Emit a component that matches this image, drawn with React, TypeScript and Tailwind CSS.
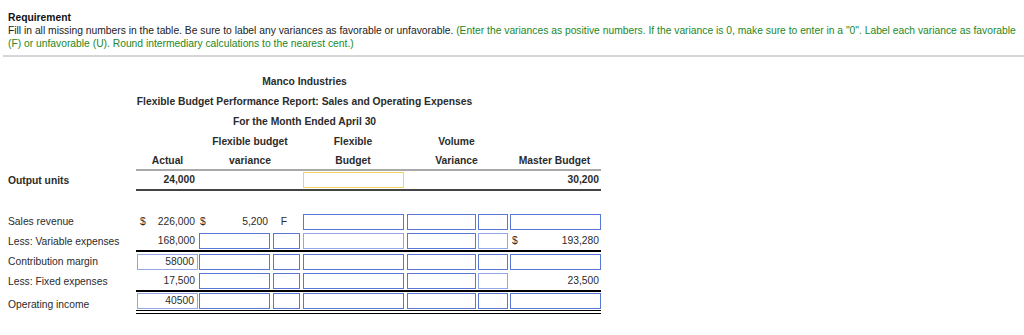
import React from "react";

const font = { fontFamily: '"Liberation Sans", Arial, Helvetica, sans-serif' };

function Box({ w, ml = "ml-[2px]", light, children }: { w: string; ml?: string; light?: boolean; children?: React.ReactNode }) {
  return (
    <div
      className={`${w} ${ml} h-[16px] border ${
        light ? "border-[#93a6e6]" : "border-[#5a76d4]"
      } bg-white text-right pr-[3px] leading-[14px]`}
    >
      {children}
    </div>
  );
}

// widths of the columns, right of the label column
const C = {
  actual: "w-[63px]",
  varAmt: "w-[72px]",
  varF: "w-[30px]",
  flex: "w-[104px]",
  volAmt: "w-[71px]",
  volF: "w-[32px]",
  master: "w-[93px]",
};

function Cell({ w, className = "", children }: { w: string; className?: string; children?: React.ReactNode }) {
  return <div className={`${w} flex items-center shrink-0 ${className}`}>{children}</div>;
}

function Row({
  label,
  line = "",
  h = "h-[20px]",
  labelClass = "",
  children,
}: {
  label: string;
  line?: string;
  h?: string;
  labelClass?: string;
  children: React.ReactNode;
}) {
  return (
    <div className={`flex ${h}`}>
      <div className={`w-[128px] shrink-0 flex items-center ${labelClass}`}>{label}</div>
      <div className={`flex ${line}`}>{children}</div>
    </div>
  );
}

export default function App() {
  return (
    <div className="w-[1024px] h-[335px] bg-white text-[#2b2b2b] text-[10.3px] overflow-hidden" style={font}>
      {/* Requirement */}
      <div className="pt-[11px] px-2 leading-[13px]">
        <div className="font-bold text-[#111]">Requirement</div>
        <p className="text-[#222]">
          Fill in all missing numbers in the table. Be sure to label any variances as favorable or unfavorable.{" "}
          <span className="text-[#23881f]">
            (Enter the variances as positive numbers. If the variance is 0, make sure to enter in a "0". Label each
            variance as favorable (F) or unfavorable (U). Round intermediary calculations to the nearest cent.)
          </span>
        </p>
      </div>
      <div className="ml-[3px] mt-[5px] h-[2px] bg-[#d6d6d6]" />

      {/* Report */}
      <div className="ml-2 mt-[15px] w-[593px]">
        <div className="font-bold text-center">
          <div className="h-[20px] leading-[20px]">Manco Industries</div>
          <div className="h-[20px] leading-[20px]">Flexible Budget Performance Report: Sales and Operating Expenses</div>
          <div className="h-[20px] leading-[20px]">For the Month Ended April 30</div>
        </div>

        <div className="font-bold">
          <Row label="">
            <Cell w={C.actual} />
            <Cell w="w-[102px]" className="justify-center">Flexible budget</Cell>
            <Cell w={C.flex} className="justify-center">Flexible</Cell>
            <Cell w="w-[103px]" className="justify-center">Volume</Cell>
            <Cell w={C.master} />
          </Row>
          <Row label="" h="h-[17px]">
            <Cell w={C.actual} className="justify-center">Actual</Cell>
            <Cell w="w-[102px]" className="justify-center">variance</Cell>
            <Cell w={C.flex} className="justify-center">Budget</Cell>
            <Cell w="w-[103px]" className="justify-center">Variance</Cell>
            <Cell w={C.master} className="justify-center">Master Budget</Cell>
          </Row>
          <Row label="Output units" h="h-[22px]" line="border-t-2 border-t-[#a9a9a9] border-b-2 border-b-[#444]" labelClass="pt-[2px]">
            <Cell w={C.actual} className="justify-end pr-[4px]">24,000</Cell>
            <Cell w={C.varAmt} />
            <Cell w={C.varF} />
            <Cell w={C.flex}>
              <div className="ml-[2px] w-[101px] h-[16px] border border-[#edd45e]" />
            </Cell>
            <Cell w={C.volAmt} />
            <Cell w={C.volF} />
            <Cell w={C.master} className="justify-end pr-[2px]">30,200</Cell>
          </Row>
        </div>

        <div className="h-[21px]" />

        <Row label="Sales revenue">
          <Cell w={C.actual} className="justify-between pl-[4px] pr-[4px]">
            <span>$</span>
            <span>226,000</span>
          </Cell>
          <Cell w={C.varAmt} className="justify-between pl-[1px] pr-[3px]">
            <span>$</span>
            <span>5,200</span>
          </Cell>
          <Cell w={C.varF} className="justify-center pr-[4px]">F</Cell>
          <Cell w={C.flex}><Box w="w-[101px]" /></Cell>
          <Cell w={C.volAmt}><Box w="w-[69px]" /></Cell>
          <Cell w={C.volF}><Box w="w-[30px]" /></Cell>
          <Cell w={C.master}><Box w="w-[91px]" /></Cell>
        </Row>

        <Row label="Less: Variable expenses" line="border-b-2 border-black">
          <Cell w={C.actual} className="justify-end pr-[4px]">168,000</Cell>
          <Cell w={C.varAmt}><Box w="w-[71px]" ml="ml-0" /></Cell>
          <Cell w={C.varF}><Box w="w-[27px]" /></Cell>
          <Cell w={C.flex}><Box w="w-[101px]" light /></Cell>
          <Cell w={C.volAmt}><Box w="w-[69px]" /></Cell>
          <Cell w={C.volF}><Box w="w-[30px]" light /></Cell>
          <Cell w={C.master} className="justify-between pl-[4px] pr-[2px]">
            <span>$</span>
            <span>193,280</span>
          </Cell>
        </Row>

        <Row label="Contribution margin">
          <Cell w={C.actual}><Box w="w-[61px]" ml="ml-[1px]" light>58000</Box></Cell>
          <Cell w={C.varAmt}><Box w="w-[71px]" ml="ml-0" /></Cell>
          <Cell w={C.varF}><Box w="w-[27px]" /></Cell>
          <Cell w={C.flex}><Box w="w-[101px]" /></Cell>
          <Cell w={C.volAmt}><Box w="w-[69px]" /></Cell>
          <Cell w={C.volF}><Box w="w-[30px]" /></Cell>
          <Cell w={C.master}><Box w="w-[91px]" /></Cell>
        </Row>

        <Row label="Less: Fixed expenses" line="border-b-2 border-black">
          <Cell w={C.actual} className="justify-end pr-[4px]">17,500</Cell>
          <Cell w={C.varAmt}><Box w="w-[71px]" ml="ml-0" /></Cell>
          <Cell w={C.varF}><Box w="w-[27px]" /></Cell>
          <Cell w={C.flex}><Box w="w-[101px]" /></Cell>
          <Cell w={C.volAmt}><Box w="w-[69px]" /></Cell>
          <Cell w={C.volF}><Box w="w-[30px]" light /></Cell>
          <Cell w={C.master} className="justify-end pr-[2px]">23,500</Cell>
        </Row>

        <Row label="Operating income" h="h-[22px]" line="border-b-4 border-double border-black" labelClass="pt-[4px]">
          <Cell w={C.actual}><Box w="w-[61px]" ml="ml-[1px]" light>40500</Box></Cell>
          <Cell w={C.varAmt}><Box w="w-[71px]" ml="ml-0" /></Cell>
          <Cell w={C.varF}><Box w="w-[27px]" /></Cell>
          <Cell w={C.flex}><Box w="w-[101px]" /></Cell>
          <Cell w={C.volAmt}><Box w="w-[69px]" /></Cell>
          <Cell w={C.volF}><Box w="w-[30px]" /></Cell>
          <Cell w={C.master}><Box w="w-[91px]" /></Cell>
        </Row>
      </div>
    </div>
  );
}
